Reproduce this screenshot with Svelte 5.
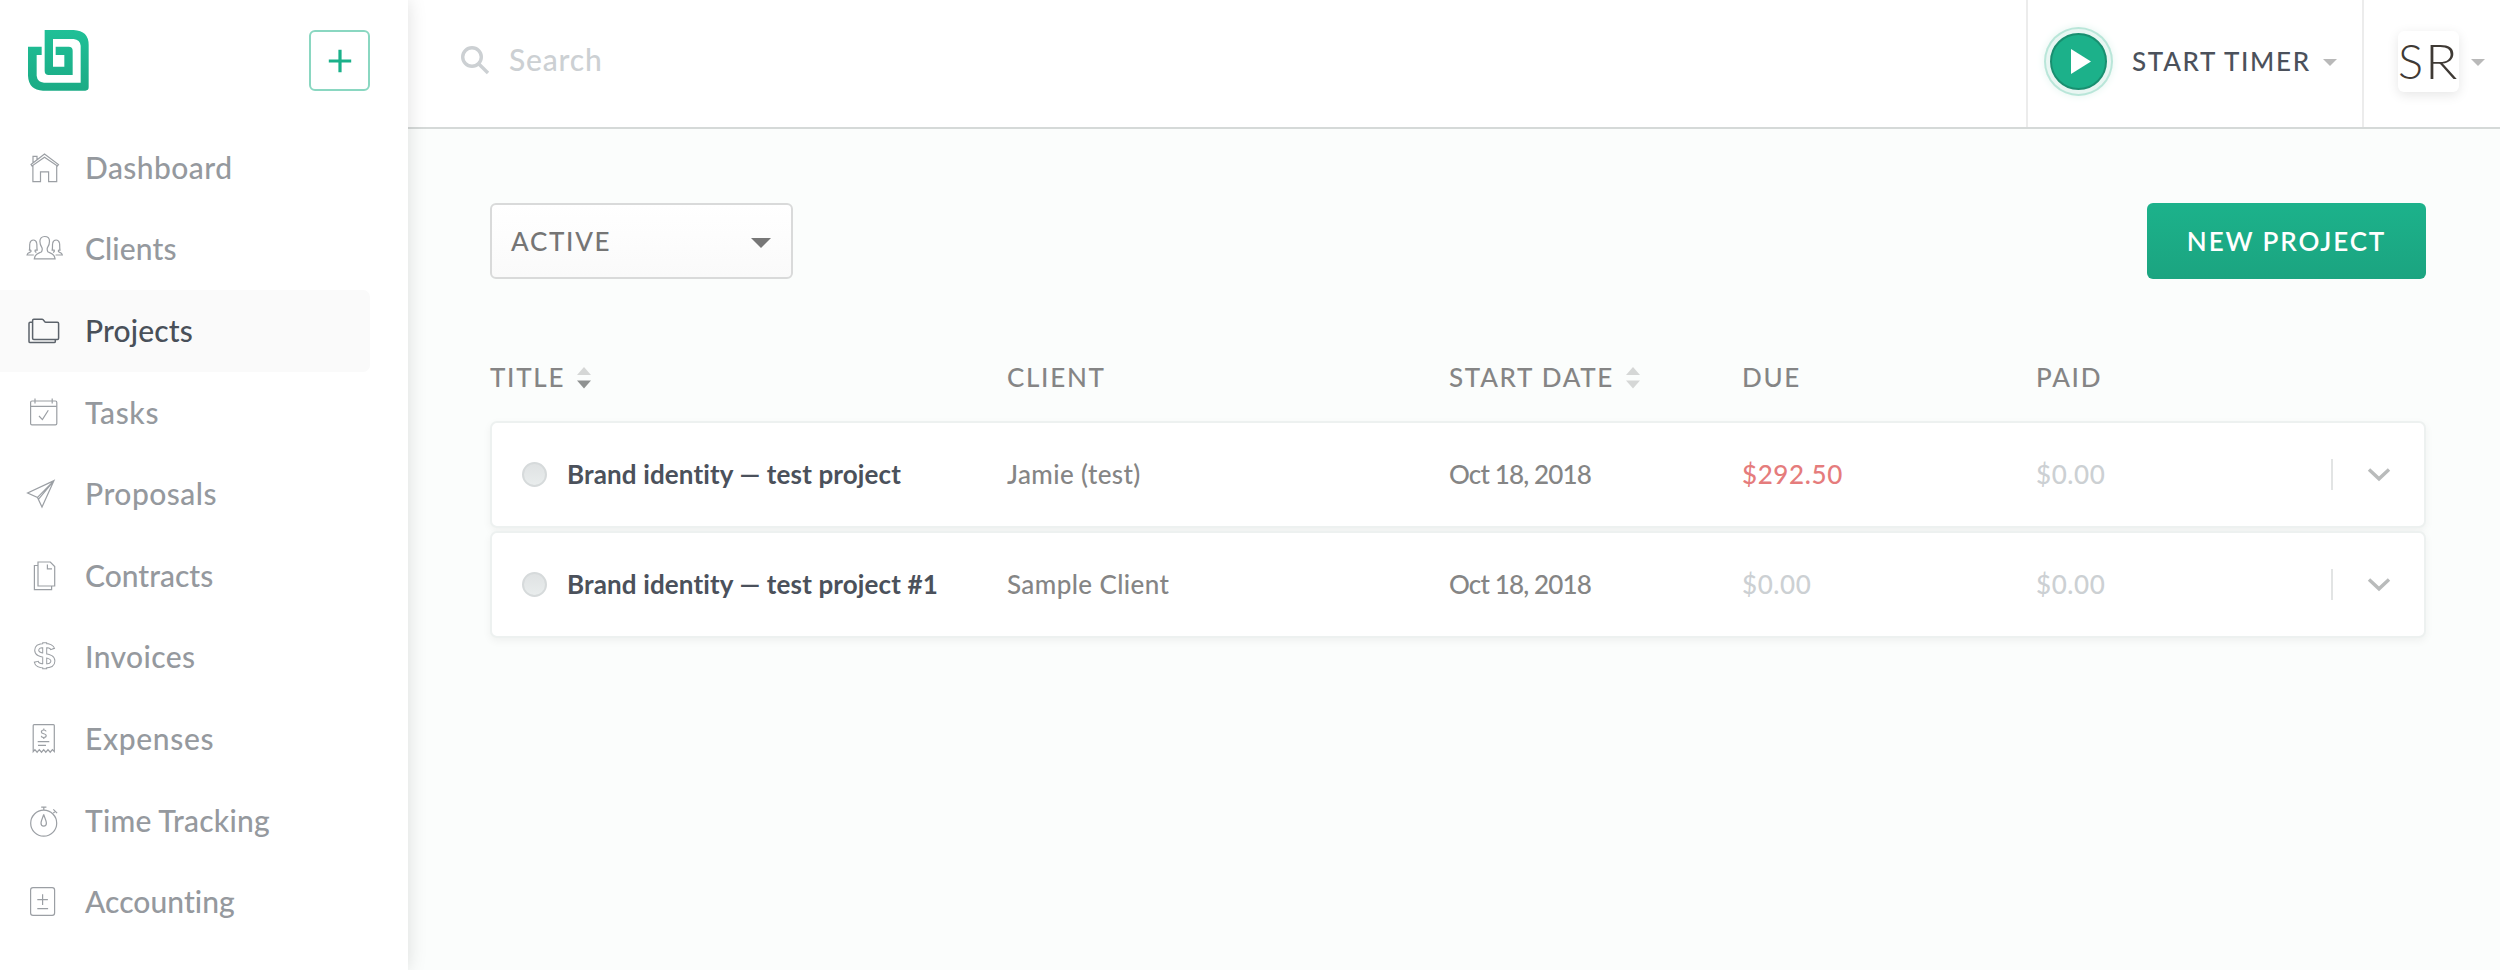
<script lang="ts">
  type NavItem = { id: string; label: string; tracking: number; active?: boolean };

  const nav: NavItem[] = [
    { id: 'dashboard', label: 'Dashboard', tracking: 0.45 },
    { id: 'clients', label: 'Clients', tracking: 0.1 },
    { id: 'projects', label: 'Projects', tracking: 0.15, active: true },
    { id: 'tasks', label: 'Tasks', tracking: 0.65 },
    { id: 'proposals', label: 'Proposals', tracking: 0.5 },
    { id: 'contracts', label: 'Contracts', tracking: 0 },
    { id: 'invoices', label: 'Invoices', tracking: 0.4 },
    { id: 'expenses', label: 'Expenses', tracking: 0.65 },
    { id: 'time', label: 'Time Tracking', tracking: 0.2 },
    { id: 'accounting', label: 'Accounting', tracking: 0.05 },
  ];

  const columns = [
    { label: 'Title', sort: 'desc' },
    { label: 'Client', sort: null },
    { label: 'Start date', sort: 'none' },
    { label: 'Due', sort: null },
    { label: 'Paid', sort: null },
  ];

  const projects = [
    { title: 'Brand identity — test project', client: 'Jamie (test)', start: 'Oct 18, 2018', due: 292.5, paid: 0 },
    { title: 'Brand identity — test project #1', client: 'Sample Client', start: 'Oct 18, 2018', due: 0, paid: 0 },
  ];

  const money = (n: number) => `$${n.toFixed(2)}`;
</script>

<div class="app">
  <aside class="sidebar">
    <div class="brand">
      <svg class="logo" viewBox="85 90 183 183">
        <defs>
          <linearGradient id="logo-fill" x1="0" y1="0" x2="0" y2="1">
            <stop offset="0" stop-color="#20c097" />
            <stop offset="1" stop-color="#1bab85" />
          </linearGradient>
        </defs>
        <path fill="url(#logo-fill)" d="M135 90H222Q267 92 267 135V262Q267 272 257 272H130Q87 270 85 227V140H126V165H111V227Q113 246 133 248H243V137Q241 119 222 117H160V200H194V165H168V140H207Q219 140 219 152V225H147Q135 225 135 213Z" />
      </svg>
      <button class="add" aria-label="Add">
        <svg viewBox="0 0 24 24"><path d="M12 .8v22.4M.8 12h22.4" /></svg>
      </button>
    </div>

    <nav>
      {#each nav as item}
        <a class="item" class:active={item.active} href="#{item.id}">
          <svg class="icon" viewBox="0 0 40 40">
            {#if item.id === 'dashboard'}
              <path d="M7 16.5 20.5 6 34.5 16.5 33.4 18 20.5 9.3 8 18zM8.9 17.5V33.7h7.6v-9.9h8.1v9.9h8.1V17.5M9 14.6V8.3h4v3.2" />
            {:else if item.id === 'clients'}
              <path d="M20.6 7.5c-3 0-4.7 2-4.7 4.8 0 3.4 1 5 2 6.3.6 1 .3 3.6-.6 4.4-2.6 1.2-6.6 1.4-7 6.8h20.8c-.4-5.4-4.4-5.6-7-6.8-.9-.8-1.2-3.4-.6-4.4 1-1.3 2-2.9 2-6.3 0-2.8-1.7-4.8-4.9-4.8z" />
              <path d="M9.8 26H3c.2-2 2-2.5 3.4-3 .8-.4.9-1.4.3-1.8H5.4c.6-3 0-5 .5-7 .5-2.3 1.8-3.2 3.4-3.2s3 .9 3.4 3.2c.5 2-.1 4 .5 7h-2c-.5 1 0 1.8 1.2 2.2" />
              <path transform="matrix(-1 0 0 1 41.4 0)" d="M9.8 26H3c.2-2 2-2.5 3.4-3 .8-.4.9-1.4.3-1.8H5.4c.6-3 0-5 .5-7 .5-2.3 1.8-3.2 3.4-3.2s3 .9 3.4 3.2c.5 2-.1 4 .5 7h-2c-.5 1 0 1.8 1.2 2.2" />
            {:else if item.id === 'projects'}
              <path d="M8.6 9.4q0-1.2 1.2-1.2h8.4c1.6 0 1.8 3 3.4 3h11.8q1.2 0 1.2 1.2v14.8q0 1.2-1.2 1.2H9.8q-1.2 0-1.2-1.2zM8.6 11.2H6.2q-1.2 0-1.2 1.2v18q0 1.2 1.2 1.2h23.9q1.2 0 1.2-1.2v-2" />
            {:else if item.id === 'tasks'}
              <rect x="6.6" y="8" width="26.2" height="23.8" rx="1.4" />
              <path d="M6.6 13.3h26.2M11 5.6v4.8M28.2 5.6v4.8M15 23l3.4 3.6 5.9-9.4" />
            {:else if item.id === 'proposals'}
              <path d="M30 6.6 3.6 19l9.9 4.4L18 33zM30 6.6 13.5 23.4M30 6.6 14.6 25.2" />
            {:else if item.id === 'contracts'}
              <path d="M14 6h12.3l4.4 4.6V30H14zM23.4 8.4v4.5h4.6M14 9.5h-3.6v24.1h17.2V30" />
            {:else if item.id === 'invoices'}
              <path class="edge" d="M20.7 5.2v27M28.8 12.4c-.8-2.6-3.6-4-8.1-4-5 0-8 1.7-8 4.9 0 3.4 3 4.2 8 5.2 5.4 1 8.2 2 8.2 5.4s-3.2 5-8.2 5-8-1.6-8.6-4.7" />
              <path class="hollow" d="M20.7 6.2v25M28.5 11.4c-1-2-3.6-3-7.8-3-5 0-8 1.7-8 4.9 0 3.4 3 4.2 8 5.2 5.4 1 8.2 2 8.2 5.4s-3.2 5-8.2 5-7.6-1.2-8.4-3.7" />
            {:else if item.id === 'expenses'}
              <path d="M9.2 32.6V6.6q0-.9.9-.9h19.3q.9 0 .9.9v26l-1.9-2-2.2 2.6-2.2-2.6-2.2 2.6-2.1-2.6-2.2 2.6-2.2-2.6-2.2 2.6-2.2-2.6zM13.7 22.7h11.6M14 26.3h8" />
              <path d="M22.2 12.4c-.4-1-1.2-1.4-2.5-1.4s-2.3.7-2.3 1.9c0 2.7 4.8 1 4.8 3.7 0 1.2-1 1.9-2.4 1.9s-2.3-.6-2.5-1.7M19.8 9.6v1.4M19.8 18.5v1.4" />
            {:else if item.id === 'time'}
              <circle cx="19.7" cy="22.2" r="13" />
              <path d="M17.2 6.1h5.2M19.8 6.1v3M29.3 8.4l3.8 3.8M31.2 10.3l-1.9 1.9M19.7 13.4c-.8 3.2-2.7 6-2.7 8.6 0 2 1 3.2 2.7 3.2s2.7-1.2 2.7-3.2c0-2.6-1.9-5.4-2.7-8.6z" />
            {:else}
              <rect x="6.6" y="5.6" width="24" height="27.8" rx="2.4" />
              <path d="M18.6 12.3v10.6M13.3 17.6h10.6M13.3 26.6h10.8" />
            {/if}
          </svg>
          <span style="letter-spacing: {item.tracking}px">{item.label}</span>
        </a>
      {/each}
    </nav>
  </aside>

  <div class="page">
    <header class="topbar">
      <div class="search">
        <svg viewBox="0 0 29 29"><circle cx="11" cy="11" r="9.3" /><path d="m17.6 17.8 9.4 9.2" /></svg>
        <span>Search</span>
      </div>
      <div class="timer">
        <span class="play">
          <svg viewBox="0 0 20 25"><path d="M0 0 20 12.5 0 25z" /></svg>
        </span>
        <span class="timer-label">Start timer</span>
        <i class="caret"></i>
      </div>
      <div class="account">
        <span class="avatar"><span class="s">S</span><span class="r">R</span></span>
        <i class="caret"></i>
      </div>
    </header>

    <main>
      <div class="toolbar">
        <div class="select">
          <span>Active</span>
          <i></i>
        </div>
        <button class="primary">New project</button>
      </div>

      <div class="grid head">
        {#each columns as col}
          <div class="th">
            {col.label}
            {#if col.sort}
              <svg class="sort" class:desc={col.sort === 'desc'} viewBox="0 0 14 22">
                <path d="M0 8 7 0l7 8z" />
                <path class="down" d="M0 13.5h14l-7 8z" />
              </svg>
            {/if}
          </div>
        {/each}
      </div>

      {#each projects as p}
        <div class="grid card">
          <div class="title"><span class="dot"></span><span>{p.title}</span></div>
          <div class="client">{p.client}</div>
          <div class="date">{p.start}</div>
          <div class="money" class:owed={p.due > 0}>{money(p.due)}</div>
          <div class="money">{money(p.paid)}</div>
          <div class="more">
            <svg viewBox="0 0 24 15"><path d="m2 2.4 10 9.4 10-9.4" /></svg>
          </div>
        </div>
      {/each}
    </main>
  </div>
</div>

<style>
  :global(body) { background: #fbfdfc; }
  .app {
    display: flex;
    height: 970px;
    overflow: hidden;
    font-family: Lato, "Open Sans", sans-serif;
    color: #858585;
  }
  button { font: inherit; padding: 0; box-sizing: border-box; }

  /* sidebar */
  .sidebar {
    flex: none;
    width: 408px;
    background: #fff;
    box-shadow: 0 0 18px rgba(0, 0, 0, 0.13);
    z-index: 1;
  }
  .brand {
    display: flex;
    justify-content: space-between;
    align-items: flex-start;
    height: 127px;
    padding: 30px 38px 0 28px;
    box-sizing: border-box;
  }
  .logo { width: 61px; height: 61px; }
  .add {
    display: flex;
    align-items: center;
    justify-content: center;
    width: 61px;
    height: 61px;
    border: 2px solid #8ad7c1;
    border-radius: 6px;
    background: #fff;
  }
  .add svg { width: 24px; height: 24px; stroke: #1bb18a; stroke-width: 3.2; }
  .item {
    display: flex;
    align-items: center;
    gap: 21px;
    width: 370px;
    height: 81.6px;
    padding-left: 24px;
    box-sizing: border-box;
    border-radius: 0 7px 7px 0;
    font-size: 30px;
    font-weight: 500;
    color: #95999e;
    text-decoration: none;
  }
  .item span { padding-bottom: 2px; }
  .item.active { background: #fafafa; color: #495059; }
  .icon {
    width: 40px;
    height: 40px;
    fill: none;
    stroke: #9b9fa4;
    stroke-width: 1.2;
    overflow: visible;
  }
  .active .icon { stroke: #5c636b; stroke-width: 1.5; }
  .icon .edge { stroke-width: 5; }
  .icon .hollow { stroke: #fff; stroke-width: 3; }

  /* top bar */
  .page { flex: 1; min-width: 0; }
  .topbar {
    display: flex;
    height: 129px;
    box-sizing: border-box;
    border-bottom: 2px solid #d5d9d8;
    background: #fff;
  }
  .search {
    flex: 1;
    display: flex;
    align-items: center;
    gap: 19px;
    padding: 0 0 7px 53px;
    font-size: 30px;
    font-weight: 500;
    letter-spacing: 0.8px;
    color: #ccd0d3;
  }
  .search span { padding-bottom: 2px; }
  .search svg { width: 29px; height: 29px; fill: none; stroke: #ccd0d3; stroke-width: 3.4; }
  .timer, .account {
    display: flex;
    align-items: center;
    box-sizing: border-box;
    padding-bottom: 5px;
    border-left: 2px solid #ececec;
  }
  .timer { width: 336px; padding-left: 17px; }
  .account { width: 138px; padding-left: 34px; }
  .play {
    display: flex;
    align-items: center;
    justify-content: center;
    width: 57px;
    height: 57px;
    margin: 0 25px 0 5px;
    box-sizing: border-box;
    border: 2px solid #198f70;
    border-radius: 50%;
    background: #1cb18a;
    box-shadow: 0 0 0 4px #e8f6f2, 0 0 0 6px #b9e6d9, 0 0 8px 6px #e4f5f0;
  }
  .play svg { width: 20px; height: 25px; margin-left: 4px; fill: #fff; }
  .timer-label {
    font-size: 26px;
    font-weight: 500;
    letter-spacing: 1.7px;
    text-transform: uppercase;
    color: #4b515b;
  }
  .caret {
    border: 7.5px solid transparent;
    border-top-color: #b9b9b9;
    border-bottom: 0;
    margin: 3px 0 0 12px;
  }
  .avatar {
    display: flex;
    width: 61px;
    height: 61px;
    border-radius: 6px;
    background: #fff;
    box-shadow: 0 3px 12px rgba(0, 0, 0, 0.1);
    font-size: 47px;
    font-weight: 300;
    line-height: 61px;
    color: #3f3a35;
  }
  .avatar .s { width: 27px; }
  .avatar .r { transform: scaleX(1.14); transform-origin: left; }

  /* content */
  main { padding: 74px 74px 0 82px; }
  .toolbar { display: flex; justify-content: space-between; }
  .select {
    display: flex;
    align-items: center;
    justify-content: space-between;
    width: 303px;
    height: 76px;
    padding: 0 20px 0 19px;
    box-sizing: border-box;
    border: 2px solid #d9dada;
    border-radius: 6px;
    background: linear-gradient(#fff, #fafafa);
    font-size: 26px;
    font-weight: 500;
    letter-spacing: 1.7px;
    text-transform: uppercase;
    color: #757575;
  }
  .select i {
    border: 10px solid transparent;
    border-top-color: #777;
    border-bottom: 0;
    margin-top: 4px;
  }
  .primary {
    width: 279px;
    height: 76px;
    border: 0;
    border-radius: 6px;
    background: linear-gradient(#1cb28b, #1ba480);
    font-size: 26px;
    font-weight: 600;
    letter-spacing: 1.85px;
    text-transform: uppercase;
    color: #fff;
  }
  .grid {
    display: grid;
    grid-template-columns: 517px 442px 293px 294px 1fr 93px;
    align-items: center;
  }
  .head {
    height: 142px;
    padding-top: 56px;
    box-sizing: border-box;
    align-items: start;
    font-size: 26px;
    font-weight: 500;
    letter-spacing: 1.7px;
    line-height: 85px;
    text-transform: uppercase;
  }
  .th { display: flex; align-items: center; }
  .sort { width: 14px; height: 22px; margin-left: 12px; fill: #d5d7d6; }
  .sort.desc .down { fill: #8f9291; }
  .card {
    height: 107px;
    margin-bottom: 3px;
    border: 2px solid #edf1f0;
    border-radius: 7px;
    box-sizing: border-box;
    background: #fff;
    grid-template-columns: 515px 442px 293px 294px 1fr 93px;
    box-shadow: 0 3px 8px rgba(0, 20, 15, 0.05);
    font-size: 26px;
  }
  .title {
    display: flex;
    align-items: center;
    padding-left: 30px;
    font-weight: 700;
    letter-spacing: 0.14px;
    color: #4b515b;
  }
  .dot {
    width: 25px;
    height: 25px;
    margin-right: 20px;
    box-sizing: border-box;
    border: 2px solid #d6dadb;
    border-radius: 50%;
    background: linear-gradient(#dfe2e3, #e9eded);
  }
  .client { letter-spacing: 0.4px; }
  .date { letter-spacing: -0.85px; }
  .money { letter-spacing: 0.6px; color: #ccd0d3; }
  .money.owed { color: #e57c7c; }
  .client, .date, .money { font-weight: 500; }
  .title span:last-child, .client, .date, .money { padding-bottom: 2px; }
  .more {
    display: flex;
    align-items: center;
    height: 31px;
    border-left: 2px solid #e2e4e4;
    padding-left: 34px;
    box-sizing: border-box;
  }
  .more svg { width: 24px; height: 15px; fill: none; stroke: #b9bbbb; stroke-width: 3.4; }
</style>
